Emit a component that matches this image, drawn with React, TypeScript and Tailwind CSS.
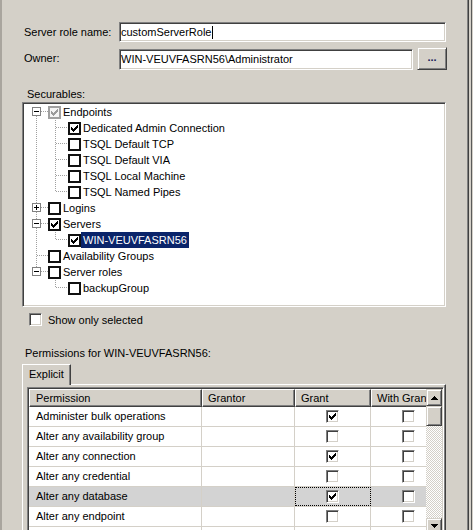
import React from "react";

const sunken =
  "border border-t-[#808080] border-l-[#808080] border-b-white border-r-white shadow-[inset_1px_1px_0_#404040,inset_-1px_-1px_0_#d4d0c8]";
const raised =
  "border border-t-[#d4d0c8] border-l-[#d4d0c8] border-b-[#404040] border-r-[#404040] shadow-[inset_1px_1px_0_#ffffff,inset_-1px_-1px_0_#808080]";
const headerCell =
  "flex h-[18px] shrink-0 items-center border border-t-white border-l-white border-b-[#404040] border-r-[#404040] shadow-[inset_-1px_-1px_0_#808080] whitespace-nowrap overflow-hidden";

// classic 7x7 check glyph
const checkPixels = [
  [7, 1], [6, 2], [7, 2], [1, 3], [5, 3], [6, 3], [7, 3],
  [1, 4], [2, 4], [4, 4], [5, 4], [6, 4],
  [1, 5], [2, 5], [3, 5], [4, 5], [5, 5],
  [2, 6], [3, 6], [4, 6], [3, 7],
];

function Check({ color = "#000000" }: { color?: string }) {
  return (
    <svg width="9" height="9" viewBox="0 0 9 9" shapeRendering="crispEdges">
      {checkPixels.map(([x, y]) => (
        <rect key={`${x}-${y}`} x={x} y={y} width="1" height="1" fill={color} />
      ))}
    </svg>
  );
}

type TreeState = "none" | "checked" | "gray";

function TreeBox({ state }: { state: TreeState }) {
  if (state === "gray") {
    return (
      <div className="flex h-[13px] w-[13px] shrink-0 items-center justify-center border-2 border-[#a0a0a0] bg-[#f4f4f4]">
        <Check color="#9a9a9a" />
      </div>
    );
  }
  return (
    <div className="flex h-[13px] w-[13px] shrink-0 items-center justify-center border-2 border-[#111111] bg-white">
      {state === "checked" && <Check />}
    </div>
  );
}

function GridBox({ checked }: { checked?: boolean }) {
  return (
    <div className={`${sunken} flex h-[13px] w-[13px] items-center justify-center bg-white`}>
      {checked && <Check />}
    </div>
  );
}

type Row = {
  level: 0 | 1;
  text: string;
  state?: TreeState;
  exp?: "-" | "+";
  rootV: "full" | "bottom" | "top" | "none";
  childV?: "full" | "top";
  selected?: boolean;
};

const treeRows: Row[] = [
  { level: 0, text: "Endpoints", state: "gray", exp: "-", rootV: "bottom" },
  { level: 1, text: "Dedicated Admin Connection", state: "checked", rootV: "full", childV: "full" },
  { level: 1, text: "TSQL Default TCP", rootV: "full", childV: "full" },
  { level: 1, text: "TSQL Default VIA", rootV: "full", childV: "full" },
  { level: 1, text: "TSQL Local Machine", rootV: "full", childV: "full" },
  { level: 1, text: "TSQL Named Pipes", rootV: "full", childV: "top" },
  { level: 0, text: "Logins", exp: "+", rootV: "full" },
  { level: 0, text: "Servers", state: "checked", exp: "-", rootV: "full" },
  { level: 1, text: "WIN-VEUVFASRN56", state: "checked", rootV: "full", childV: "top", selected: true },
  { level: 0, text: "Availability Groups", rootV: "full" },
  { level: 0, text: "Server roles", exp: "-", rootV: "top" },
  { level: 1, text: "backupGroup", rootV: "none", childV: "top" },
];

const dot = { stroke: "#a0a0a0", strokeWidth: 1, strokeDasharray: "1 1" };

function TreeRow({ r }: { r: Row }) {
  const w = r.level === 0 ? 24 : 44;
  return (
    <div className="flex h-4 items-center">
      <svg width={w} height={16} className="shrink-0" shapeRendering="crispEdges">
        {r.rootV === "full" && <line x1="12.5" y1="0" x2="12.5" y2="16" {...dot} />}
        {r.rootV === "bottom" && <line x1="12.5" y1="8" x2="12.5" y2="16" {...dot} />}
        {r.rootV === "top" && <line x1="12.5" y1="0" x2="12.5" y2="8" {...dot} />}
        {r.level === 0 && <line x1="13" y1="7.5" x2="24" y2="7.5" {...dot} />}
        {r.childV === "full" && <line x1="31.5" y1="0" x2="31.5" y2="16" {...dot} />}
        {r.childV === "top" && <line x1="31.5" y1="0" x2="31.5" y2="8" {...dot} />}
        {r.level === 1 && <line x1="32" y1="7.5" x2="44" y2="7.5" {...dot} />}
        {r.exp && (
          <g>
            <rect x="8.5" y="3.5" width="8" height="8" fill="#ffffff" stroke="#808080" />
            <line x1="10" y1="7.5" x2="15" y2="7.5" stroke="#000000" />
            {r.exp === "+" && <line x1="12.5" y1="5" x2="12.5" y2="10" stroke="#000000" />}
          </g>
        )}
      </svg>
      <TreeBox state={r.state ?? "none"} />
      <span
        className={
          r.selected
            ? "h-4 bg-[#0a246a] px-[2px] leading-4 text-white"
            : "h-4 px-[2px] leading-4"
        }
      >
        {r.text}
      </span>
    </div>
  );
}

const perms = [
  { name: "Administer bulk operations", grant: true },
  { name: "Alter any availability group" },
  { name: "Alter any connection", grant: true },
  { name: "Alter any credential" },
  { name: "Alter any database", grant: true, hot: true },
  { name: "Alter any endpoint" },
];

function Arrow({ up }: { up?: boolean }) {
  return (
    <svg width="7" height="4" viewBox="0 0 7 4" shapeRendering="crispEdges">
      <polygon points={up ? "3.5,0 7,4 0,4" : "0,0 7,0 3.5,4"} fill="#000000" />
    </svg>
  );
}

export default function App() {
  return (
    <div className="flex h-[530px] w-[473px] overflow-hidden bg-[#d4d0c8] font-['Liberation_Sans',Arial,sans-serif] text-[11px] text-black">
      <div className="w-[2px] shrink-0 bg-[#a9a59e]" />

      <div className="flex w-[465px] shrink-0 flex-col pl-[20px] pt-[22px]">
        <div className="flex w-[425px] flex-col">
          {/* Server role name */}
          <div className="flex h-[20px] items-center">
            <span className="w-[97px] shrink-0 pl-[2px]">Server role name:</span>
            <div className={`${sunken} flex h-[20px] w-[327px] items-center bg-white pl-[1px]`}>
              customServerRole
              <span className="ml-px inline-block h-[13px] w-px bg-black" />
            </div>
          </div>

          {/* Owner */}
          <div className="mt-[5px] flex h-[23px] items-center">
            <span className="w-[97px] shrink-0 pl-[2px]">Owner:</span>
            <div className={`${sunken} flex h-[21px] w-[294px] items-center self-end bg-white pl-[1px]`}>
              WIN-VEUVFASRN56\Administrator
            </div>
            <div className={`${raised} ml-[4px] flex h-[23px] w-[30px] items-center justify-center pb-[2px] font-bold text-[#1a1a5a]`}>
              ...
            </div>
          </div>

          <div className="mt-[17px] h-[14px] pl-[5px] leading-[14px]">Securables:</div>

          {/* Tree */}
          <div className={`${sunken} mt-[1px] flex h-[205px] w-[424px] flex-col overflow-hidden bg-white pl-[1px] pt-[1px]`}>
            {treeRows.map((r) => (
              <TreeRow key={r.text} r={r} />
            ))}
          </div>

          <div className="mt-[6px] flex h-[13px] items-center">
            <div className={`${sunken} ml-[7px] h-[13px] w-[13px] bg-white`} />
            <span className="ml-[6px] pt-px">Show only selected</span>
          </div>

          <div className="mt-[20px] h-[14px] pl-[3px] leading-[14px]">Permissions for WIN-VEUVFASRN56:</div>

          {/* Tab */}
          <div className="relative z-10 -mb-px mt-[4px] h-[21px] w-[49px] border-l border-t border-r border-l-white border-t-white border-r-[#404040] bg-[#d4d0c8] pl-[6px] leading-[18px] shadow-[inset_-1px_0_0_#808080]">
            Explicit
          </div>

          {/* Tab panel */}
          <div className="h-[160px] w-[424px] border-l border-t border-r border-l-white border-t-white border-r-[#404040] pl-[4px] pt-[2px] shadow-[inset_-1px_0_0_#808080]">
            <div className={`${sunken} w-[417px] bg-white p-px`}>
              <div className="flex h-[145px] overflow-hidden">
                <div className="w-[397px] shrink-0 overflow-hidden">
                  <div className="flex w-[418px] bg-[#d4d0c8]">
                    <div className={`${headerCell} w-[173px] pl-[6px]`}>Permission</div>
                    <div className={`${headerCell} w-[93px] pl-[5px]`}>Grantor</div>
                    <div className={`${headerCell} w-[76px] pl-[5px]`}>Grant</div>
                    <div className={`${headerCell} w-[76px] pl-[5px]`}>With Grant</div>
                  </div>
                  {perms.map((p) => (
                    <div
                      key={p.name}
                      className={
                        p.hot
                          ? "flex h-[20px] w-[418px] border-b border-[#d4d0c8] bg-[#d3d3d3]"
                          : "flex h-[20px] w-[418px] border-b border-[#d4d0c8]"
                      }
                    >
                      <div className="flex w-[173px] shrink-0 items-center border-r border-[#d4d0c8] pl-[7px]">{p.name}</div>
                      <div className="w-[93px] shrink-0 border-r border-[#d4d0c8]" />
                      <div
                        className={
                          p.hot
                            ? "flex w-[76px] shrink-0 items-center justify-center border-r border-[#d4d0c8] outline-1 -outline-offset-1 outline-dotted outline-black"
                            : "flex w-[76px] shrink-0 items-center justify-center border-r border-[#d4d0c8]"
                        }
                      >
                        <GridBox checked={p.grant} />
                      </div>
                      <div className="flex w-[76px] shrink-0 items-center justify-center border-r border-[#d4d0c8]">
                        <GridBox />
                      </div>
                    </div>
                  ))}
                  <div className="flex h-[20px] w-[418px]">
                    <div className="w-[173px] shrink-0 border-r border-[#d4d0c8]" />
                    <div className="w-[93px] shrink-0 border-r border-[#d4d0c8]" />
                    <div className="w-[76px] shrink-0 border-r border-[#d4d0c8]" />
                  </div>
                </div>

                {/* Scrollbar */}
                <div className="flex w-[16px] shrink-0 flex-col">
                  <div className={`${raised} flex h-[17px] items-center justify-center bg-[#d4d0c8]`}>
                    <Arrow up />
                  </div>
                  <div className={`${raised} h-[20px] bg-[#d4d0c8]`} />
                  <div className="flex-1 bg-[repeating-conic-gradient(#ffffff_0_25%,#d4d0c8_0_50%)] bg-[length:2px_2px]" />
                  <div className={`${raised} flex h-[16px] items-center justify-center bg-[#d4d0c8]`}>
                    <Arrow />
                  </div>
                </div>
              </div>
            </div>
          </div>
        </div>
      </div>

      {/* splitter at right edge */}
      <div className="flex shrink-0">
        <div className="w-px bg-[#808080]" />
        <div className="w-px bg-[#404040]" />
        <div className="w-[2px] bg-[#d4d0c8]" />
        <div className="w-px bg-[#5a5a5a]" />
      </div>
    </div>
  );
}
